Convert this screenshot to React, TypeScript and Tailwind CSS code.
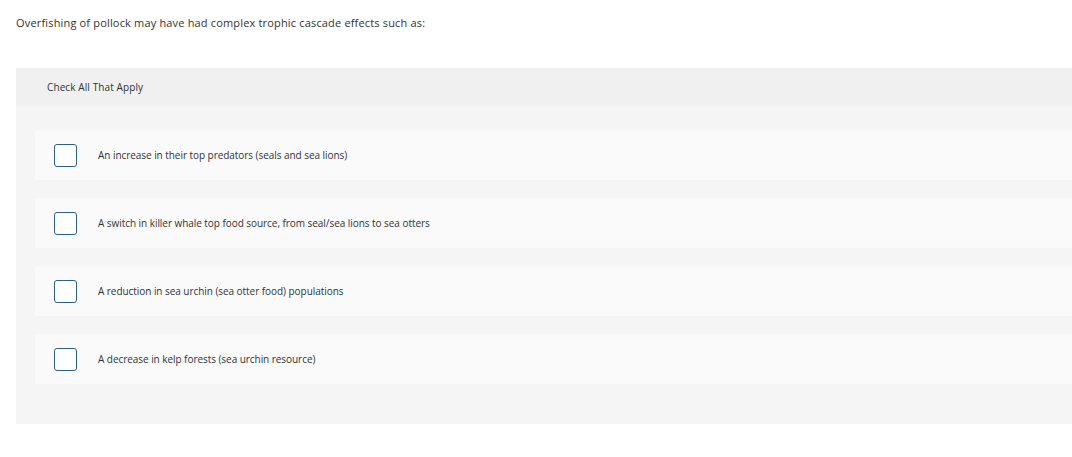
const OPTIONS = [
  'An increase in their top predators (seals and sea lions)',
  'A switch in killer whale top food source, from seal/sea lions to sea otters',
  'A reduction in sea urchin (sea otter food) populations',
  'A decrease in kelp forests (sea urchin resource)',
];

export default function App() {
  return (
    <div className="min-h-screen bg-white font-['Open_Sans',sans-serif] text-[#333]">
      <p className="pl-4 pt-[15px] text-[11px] leading-[15px] tracking-[0.17px]">
        Overfishing of pollock may have had complex trophic cascade effects such as:
      </p>

      <div className="ml-4 mt-[38px] bg-[#f5f5f5]">
        <div className="flex h-[38px] items-center bg-[#f0f0f0] pl-[31px] text-[10px] tracking-[0.1px]">
          Check All That Apply
        </div>
        <div className="flex flex-col gap-[18px] pb-[40px] pl-[19px] pt-[24px]">
          {OPTIONS.map((opt) => (
            <label
              key={opt}
              className="flex h-[50px] items-center rounded-l-[3px] bg-[#fafafa] pl-[19px]"
            >
              <span className="h-[23px] w-[23px] shrink-0 rounded-[3px] border-[1.5px] border-[#2c5f8e] bg-white" />
              <span className="ml-[21px] text-[10px] tracking-[-0.05px]">{opt}</span>
            </label>
          ))}
        </div>
      </div>
    </div>
  );
}
